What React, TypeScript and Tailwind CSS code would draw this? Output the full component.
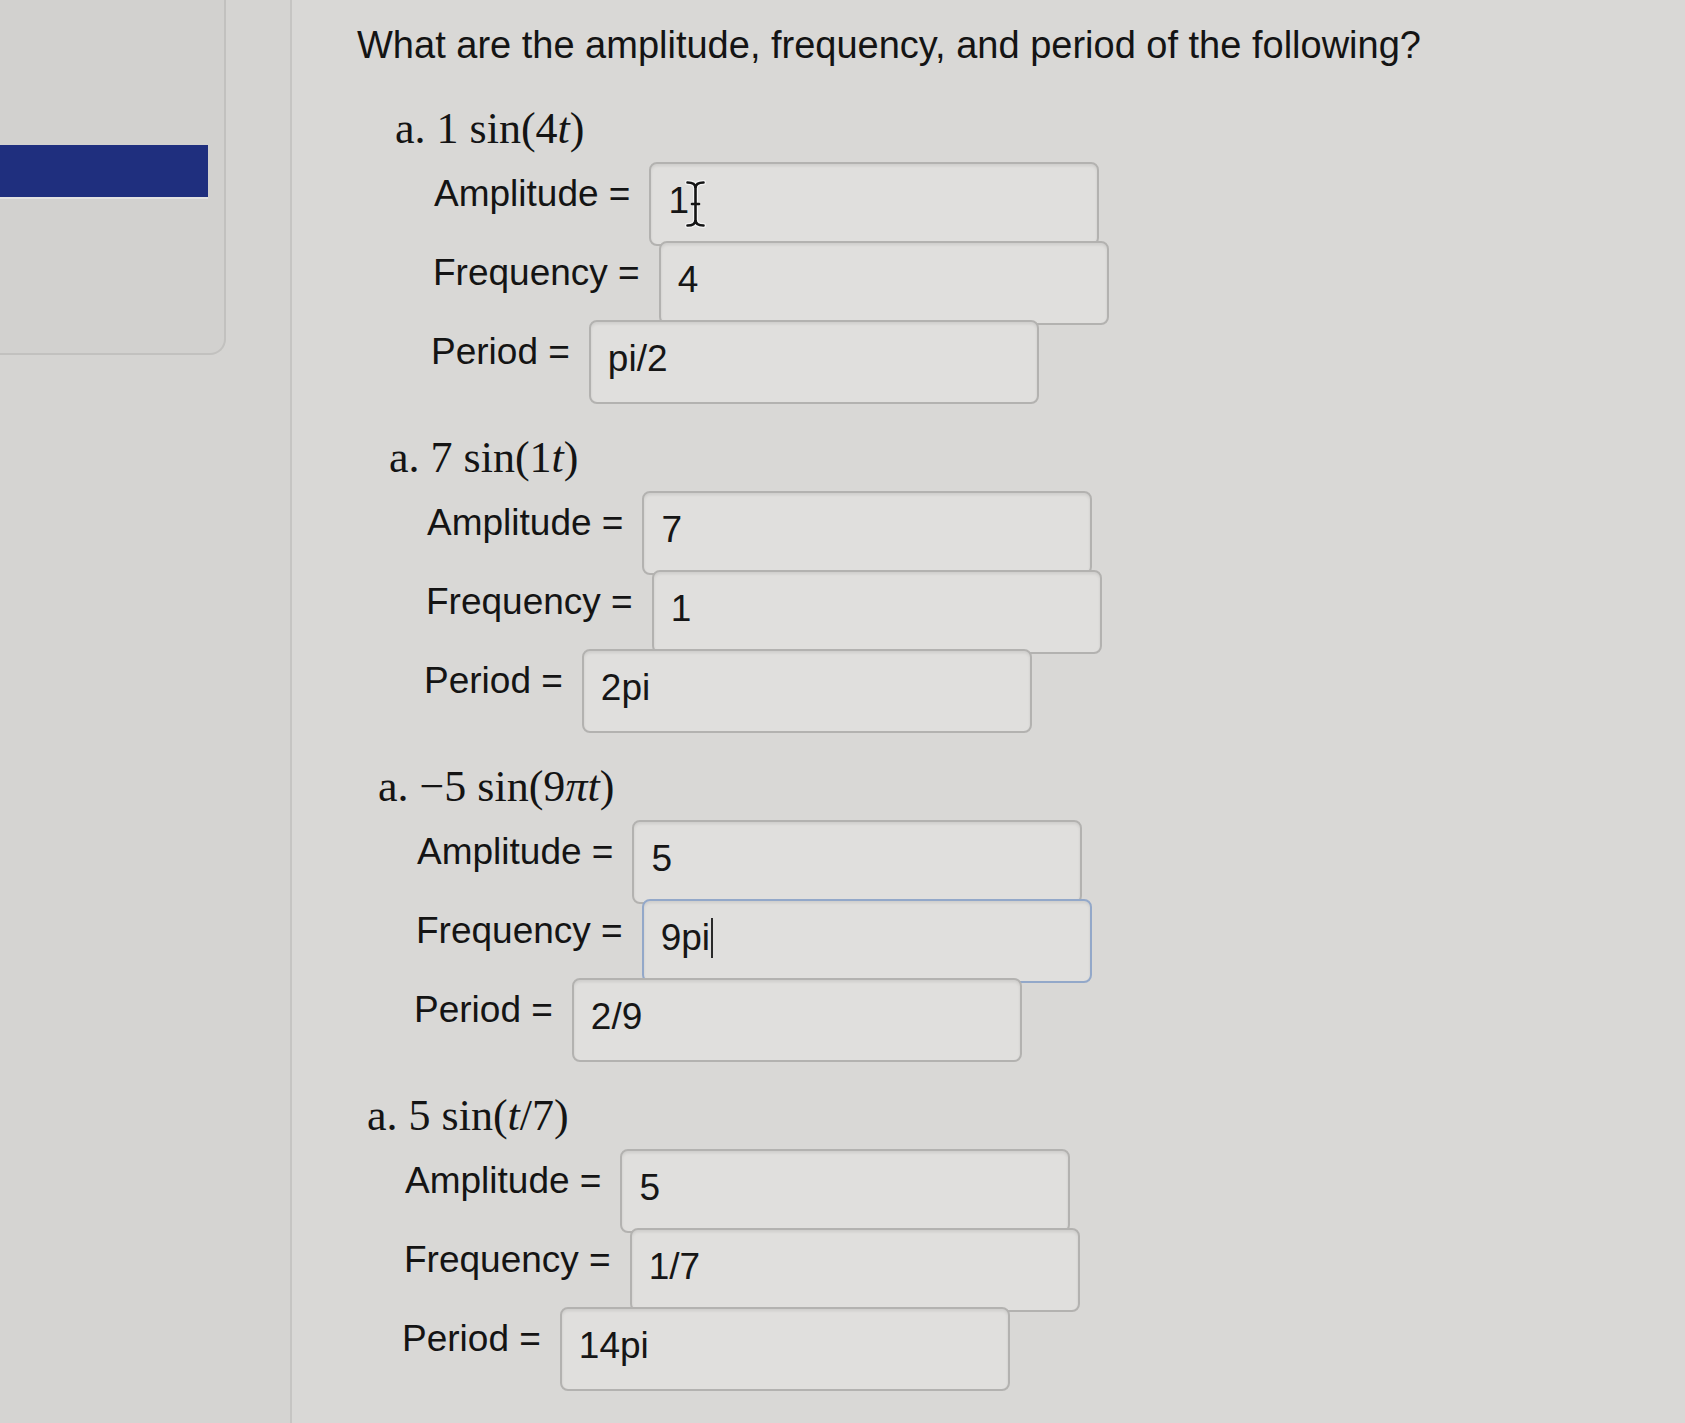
import type { ReactNode } from "react";

interface Field {
  label: string;
  value: string;
  pad: string;
  focused?: boolean;
  pointer?: boolean;
}

interface Problem {
  offset: string;
  expr: ReactNode;
  fields: Field[];
}

const sans = { fontFamily: '"Liberation Sans", Arial, sans-serif' };
const serif = { fontFamily: '"Liberation Serif", "Times New Roman", serif' };

function IBeam() {
  return (
    <svg
      className="absolute left-[34px] top-[16px] w-[21px] h-[48px]"
      viewBox="0 0 21 48"
      fill="none"
    >
      <g stroke="#f4f4f4" strokeWidth="5" strokeLinecap="round">
        <path d="M2.5 2.5 Q10.5 2.5 10.5 8 Q10.5 2.5 18.5 2.5" />
        <path d="M10.5 8 V40" />
        <path d="M2.5 45.5 Q10.5 45.5 10.5 40 Q10.5 45.5 18.5 45.5" />
      </g>
      <g stroke="#141414" strokeWidth="2.6" strokeLinecap="round">
        <path d="M2.5 2.5 Q10.5 2.5 10.5 8 Q10.5 2.5 18.5 2.5" />
        <path d="M10.5 8 V40" />
        <path d="M2.5 45.5 Q10.5 45.5 10.5 40 Q10.5 45.5 18.5 45.5" />
        <path d="M7 24 H14" />
      </g>
    </svg>
  );
}

const problems: Problem[] = [
  {
    offset: "ml-[38px]",
    expr: (
      <>
        1<span className="ml-[11px]">sin</span>(4<i>t</i>)
      </>
    ),
    fields: [
      { label: "Amplitude =", value: "1", pad: "pl-[39px]", pointer: true },
      { label: "Frequency =", value: "4", pad: "pl-[38px]" },
      { label: "Period =", value: "pi/2", pad: "pl-[36px]" },
    ],
  },
  {
    offset: "ml-[32px]",
    expr: (
      <>
        7<span className="ml-[11px]">sin</span>(1<i>t</i>)
      </>
    ),
    fields: [
      { label: "Amplitude =", value: "7", pad: "pl-[38px]" },
      { label: "Frequency =", value: "1", pad: "pl-[37px]" },
      { label: "Period =", value: "2pi", pad: "pl-[35px]" },
    ],
  },
  {
    offset: "ml-[21px]",
    expr: (
      <>
        −5<span className="ml-[11px]">sin</span>(9<i>πt</i>)
      </>
    ),
    fields: [
      { label: "Amplitude =", value: "5", pad: "pl-[39px]" },
      { label: "Frequency =", value: "9pi", pad: "pl-[38px]", focused: true },
      { label: "Period =", value: "2/9", pad: "pl-[36px]" },
    ],
  },
  {
    offset: "ml-[10px]",
    expr: (
      <>
        5<span className="ml-[11px]">sin</span>(<i>t</i>/7)
      </>
    ),
    fields: [
      { label: "Amplitude =", value: "5", pad: "pl-[38px]" },
      { label: "Frequency =", value: "1/7", pad: "pl-[37px]" },
      { label: "Period =", value: "14pi", pad: "pl-[35px]" },
    ],
  },
];

function AnswerRow({ field }: { field: Field }) {
  return (
    <div className={`flex items-center h-[79px] ${field.pad}`}>
      <span className="text-[37px] leading-none text-[#141414] -mt-[20px]" style={sans}>
        {field.label}
      </span>
      <div
        className={`relative shrink-0 ml-[19px] w-[450px] h-[84px] rounded-[8px] border-2 bg-[#e0dfdd] shadow-[inset_0_2px_3px_rgba(0,0,0,0.08)] flex items-center pl-[17px] ${
          field.focused ? "border-[#93a8c9]" : "border-[#b3b2b0]"
        }`}
      >
        <span className="text-[37px] leading-none text-[#161616] -mt-[6px] flex items-center" style={sans}>
          {field.value}
          {field.focused && <span className="inline-block w-[2px] h-[40px] bg-[#2a2a2a] ml-[1px]" />}
        </span>
        {field.pointer && <IBeam />}
      </div>
    </div>
  );
}

export default function App() {
  return (
    <div className="flex w-full h-[1423px] overflow-hidden bg-[#d9d8d6]">
      {/* Sidebar */}
      <aside className="w-[292px] shrink-0 bg-[#d5d4d2] border-r-2 border-[#c6c5c3]">
        <div className="w-[226px] h-[355px] pt-[145px] bg-[#d2d1cf] border-r-2 border-b-2 border-[#c2c1bf] rounded-br-[16px]">
          <div className="w-[208px] h-[54px] bg-[#1f2f7e] border-b-2 border-[#e2e2e2]" />
        </div>
      </aside>

      {/* Question */}
      <main className="flex-1 pt-[23px] pl-[65px]">
        <h1 className="text-[38px] leading-[44px] text-[#141414] font-normal" style={sans}>
          What are the amplitude, frequency, and period of the following?
        </h1>

        <div className="mt-[37px] flex flex-col gap-[32px]">
          {problems.map((p, i) => (
            <section key={i} className={p.offset}>
              <div className="h-[50px] mb-[10px] flex items-center text-[44px] leading-none text-[#141414]" style={serif}>
                <span className="mr-[11px]">a.</span>
                {p.expr}
              </div>
              {p.fields.map((f) => (
                <AnswerRow key={f.label} field={f} />
              ))}
            </section>
          ))}
        </div>
      </main>
    </div>
  );
}
